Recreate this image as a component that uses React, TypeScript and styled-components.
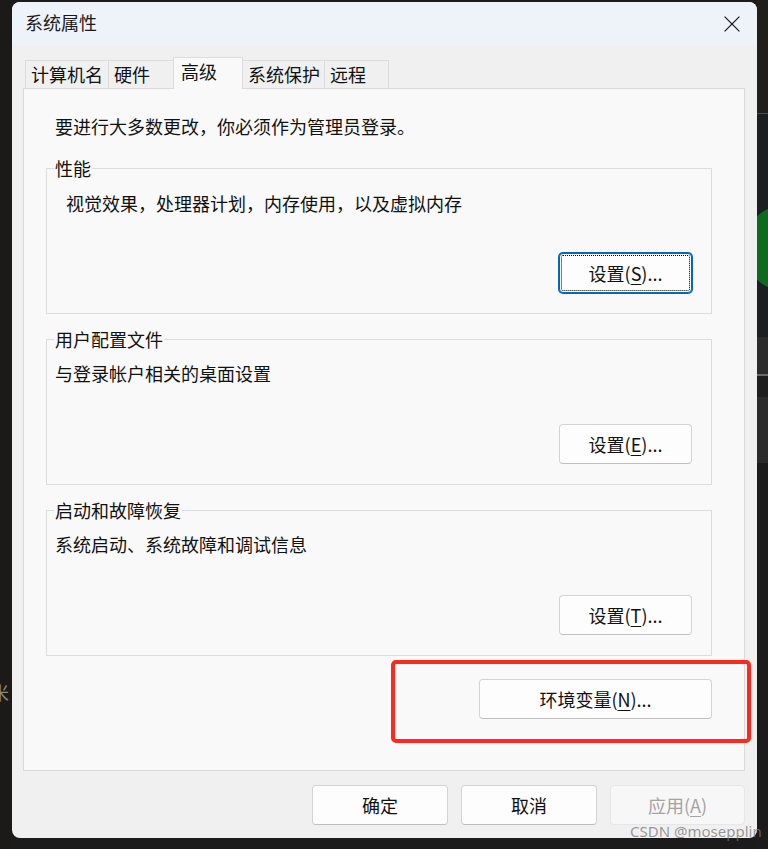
import React from "react";
import styled, { createGlobalStyle, css } from "styled-components";

const FONT = `"Noto Sans CJK SC", "Noto Sans", sans-serif`;

const TABS = [
  { label: "计算机名", width: 84 },
  { label: "硬件", width: 66 },
  { label: "高级", width: 70, active: true },
  { label: "系统保护", width: 83 },
  { label: "远程", width: 65 },
];

const GROUPS = [
  { title: "性能", text: "视觉效果，处理器计划，内存使用，以及虚拟内存", key: "S", indent: 19, top: 11, focused: true },
  { title: "用户配置文件", text: "与登录帐户相关的桌面设置", key: "E", indent: 8, top: 10 },
  { title: "启动和故障恢复", text: "系统启动、系统故障和调试信息", key: "T", indent: 8, top: 10 },
];

function CloseIcon() {
  return (
    <svg width="16" height="16" viewBox="0 0 16 16">
      <path d="M0.6 0.6 L15.4 15.4 M15.4 0.6 L0.6 15.4" stroke="#1b1b1b" strokeWidth="1.25" fill="none" />
    </svg>
  );
}

function App() {
  return (
    <Screen>
      <GlobalStyle />
      <LeftGutter>
        <GutterGlyph>米</GutterGlyph>
      </LeftGutter>

      <Dialog>
        <TitleBar>
          <TitleText>系统属性</TitleText>
          <CloseIcon />
        </TitleBar>

        <Body>
          <TabRow>
            {TABS.map((t) => (
              <Tab key={t.label} $width={t.width} $active={!!t.active}>
                {t.label}
              </Tab>
            ))}
          </TabRow>

          <Panel>
            <Intro>要进行大多数更改，你必须作为管理员登录。</Intro>

            {GROUPS.map((g) => (
              <Group key={g.title}>
                <Legend>{g.title}</Legend>
                <GroupBody $indent={g.indent} $top={g.top}>
                  <GroupText>{g.text}</GroupText>
                  <Button $width={133} $focused={!!g.focused}>
                    设置(<U>{g.key}</U>)...
                  </Button>
                </GroupBody>
              </Group>
            ))}

            <EnvButton $width={233}>
              环境变量(<U>N</U>)...
            </EnvButton>
          </Panel>

          <Footer>
            <Button $width={136}>确定</Button>
            <Button $width={136}>取消</Button>
            <Button $width={135} $disabled>
              应用(<U>A</U>)
            </Button>
          </Footer>
        </Body>

        <Highlight />
      </Dialog>

      <RightStrip />
      <Watermark>CSDN @mosepplin</Watermark>
    </Screen>
  );
}

export default App;

// Style
const GlobalStyle = createGlobalStyle`
  html, body {
    margin: 0;
    padding: 0;
    background: #1b1b1b;
  }
  body {
    font-family: ${FONT};
  }
`;

const Screen = styled.div`
  position: relative;
  display: flex;
  width: 768px;
  height: 849px;
  overflow: hidden;
  background: #1b1b1b;
`;

const LeftGutter = styled.div`
  flex: none;
  width: 12px;
  overflow: hidden;
  background: #1b1a18;
  padding-top: 680px;
  box-sizing: border-box;
`;

const GutterGlyph = styled.div`
  margin-left: -9px;
  font-size: 18px;
  line-height: 24px;
  color: #8c887e;
`;

const Dialog = styled.div`
  position: relative;
  flex: none;
  width: 745px;
  height: 836px;
  margin-top: 2px;
  border-radius: 8px;
  overflow: hidden;
  background: #f0f0f0;
  display: flex;
  flex-direction: column;
  color: #111;
  font-size: 18px;
`;

const TitleBar = styled.div`
  flex: none;
  height: 43px;
  display: flex;
  align-items: center;
  justify-content: space-between;
  padding: 0 17px 0 13px;
  background: #eef3f9;
  color: #1a1a1a;
  line-height: 24px;
`;

const TitleText = styled.span`
  margin-top: -4px;
`;

const Body = styled.div`
  display: flex;
  flex-direction: column;
  padding: 12px 12px 0 11px;
`;

const TabRow = styled.div`
  display: flex;
  align-items: flex-end;
  height: 31px;
  padding-left: 2px;
`;

const Tab = styled.div<{ $width: number; $active: boolean }>`
  box-sizing: border-box;
  width: ${(p) => p.$width}px;
  height: 28px;
  margin-left: -1px;
  padding: 0 0 2px 5px;
  display: flex;
  align-items: center;
  border: 1px solid #dcdcdc;
  border-bottom: none;
  background: #f0f0f0;
  line-height: 24px;
  white-space: nowrap;

  &:first-child {
    margin-left: 0;
  }

  ${(p) =>
    p.$active &&
    css`
      position: relative;
      z-index: 1;
      height: 32px;
      margin-bottom: -1px;
      padding-bottom: 5px;
      padding-left: 7px;
      background: #f9f9f9;
    `}
`;

const Panel = styled.div`
  box-sizing: border-box;
  width: 722px;
  height: 683px;
  display: flex;
  flex-direction: column;
  padding: 25px 32px 0 22px;
  border: 1px solid #dadada;
  background: #f9f9f9;
`;

const Intro = styled.div`
  margin: 0 0 18px 9px;
  line-height: 24px;
`;

const Group = styled.fieldset`
  margin: 0 0 13px;
  padding: 0;
  min-width: 0;
  border: 1px solid #dcdcdc;
`;

const Legend = styled.legend`
  margin-left: 7px;
  padding: 0 1px;
  line-height: 24px;
  font-size: 18px;
`;

const GroupBody = styled.div<{ $indent: number; $top: number }>`
  box-sizing: border-box;
  height: 133px;
  display: flex;
  flex-direction: column;
  justify-content: space-between;
  padding: ${(p) => p.$top}px 19px 20px ${(p) => p.$indent}px;
`;

const GroupText = styled.div`
  line-height: 24px;
`;

const Button = styled.button<{ $width: number; $focused?: boolean; $disabled?: boolean }>`
  position: relative;
  box-sizing: border-box;
  align-self: flex-end;
  width: ${(p) => p.$width}px;
  height: 40px;
  padding: 0;
  border: 1px solid #d3d3d3;
  border-bottom-color: #bfbfbf;
  border-radius: 4px;
  background: #fdfdfd;
  font-family: ${FONT};
  font-size: 18px;
  line-height: 24px;
  color: #111;

  ${(p) =>
    p.$focused &&
    css`
      border: 1px solid #0067c0;
      box-shadow: 0 0 0 1px #0067c0;
      &::after {
        content: "";
        position: absolute;
        inset: 1px;
        border: 1px dotted #000;
        border-radius: 2px;
      }
    `}

  ${(p) =>
    p.$disabled &&
    css`
      border-color: #e6e6e6;
      background: #f7f7f7;
      color: #a3a3a3;
    `}
`;

const EnvButton = styled(Button)`
  margin-top: 10px;
`;

const U = styled.span`
  text-decoration: underline;
  text-underline-offset: 3px;
  text-decoration-thickness: 1px;
`;

const Footer = styled.div`
  display: flex;
  justify-content: flex-end;
  gap: 13px;
  padding: 14px 0 0;
`;

const Highlight = styled.div`
  position: absolute;
  left: 379px;
  top: 658px;
  width: 360px;
  height: 83px;
  box-sizing: border-box;
  border: 4px solid #fb2a1e;
  border-radius: 5px;
  pointer-events: none;
`;

const RightStrip = styled.div`
  flex: 1;
  background:
    radial-gradient(circle at 30px 248px, #0f6a1f 43px, transparent 44px),
    linear-gradient(
      to bottom,
      #201f1c 0,
      #201f1c 113px,
      #4a4d50 113px,
      #4a4d50 114px,
      #1c1f22 114px,
      #1c1f22 337px,
      #2b2b2b 337px,
      #2b2b2b 374px,
      #6a6a6a 374px,
      #6a6a6a 376px,
      #1e1e1e 376px,
      #1e1e1e 397px,
      #2b2b2b 397px,
      #2b2b2b 463px,
      #1c1c1c 463px
    );
`;

const Watermark = styled.div`
  position: absolute;
  left: 630px;
  top: 821px;
  font-family: "Noto Sans", sans-serif;
  font-size: 15px;
  line-height: 20px;
  color: rgba(120, 120, 120, 0.75);
  white-space: nowrap;
  pointer-events: none;
`;
